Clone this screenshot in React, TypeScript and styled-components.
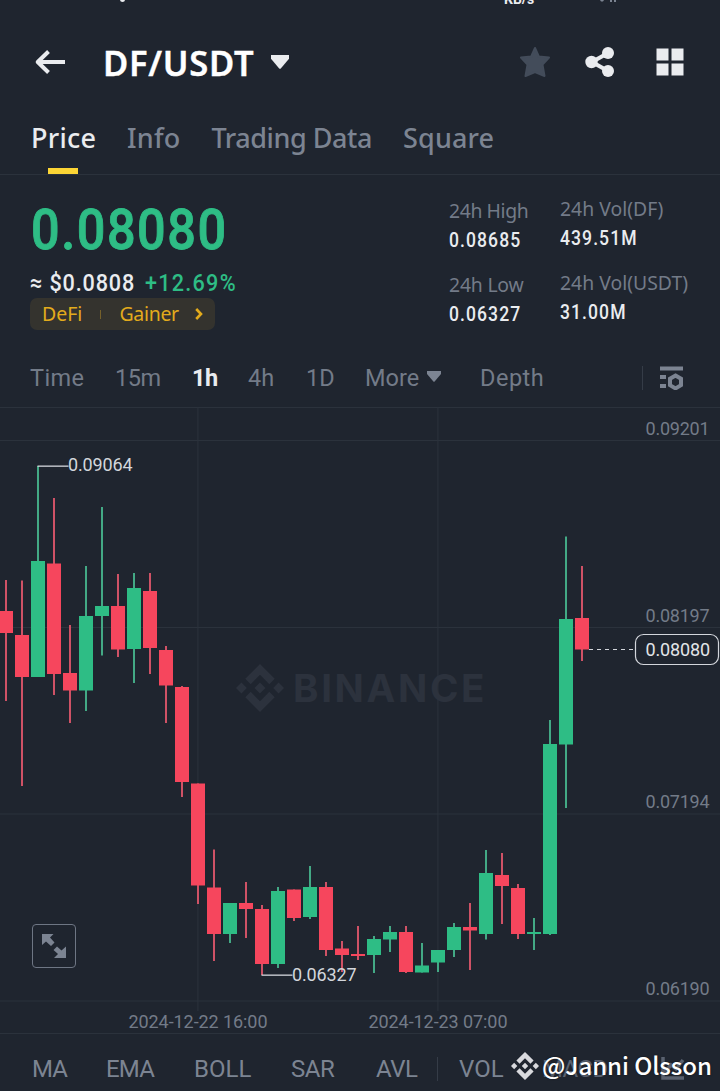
import React from 'react';
import styled, { createGlobalStyle } from 'styled-components';

const c = {
  bg: '#1f252f',
  line: '#2b323c',
  text: '#eaecef',
  muted: '#7c8492',
  dim: '#737b88',
  green: '#2ebd85',
  red: '#f6465d',
  yellow: '#fcd535',
  amber: '#e3ab1c',
};

const words = '"Noto Sans", "Open Sans", sans-serif';
const digits = 'Roboto, "Liberation Sans", sans-serif';

const GlobalStyle = createGlobalStyle`
  * { box-sizing: border-box; }
  body { margin: 0; background: ${c.bg}; }
`;

const Screen = styled.main`
  width: 720px;
  height: 1091px;
  display: flex;
  flex-direction: column;
  overflow: hidden;
  background: ${c.bg};
  color: ${c.text};
  font-family: ${words};
`;

const Label = styled.span<{ $size: number; $color?: string; $weight?: number; $track?: number; $digits?: boolean }>`
  display: block;
  white-space: nowrap;
  font-family: ${(p) => (p.$digits ? digits : words)};
  font-size: ${(p) => p.$size}px;
  font-weight: ${(p) => p.$weight ?? 400};
  letter-spacing: ${(p) => p.$track ?? 0}px;
  color: ${(p) => p.$color ?? c.text};
`;

// Figures are set slightly condensed and loosely tracked.
const Figure = styled(Label)`
  font-family: ${digits};
  transform: scaleX(0.9);
  transform-origin: left center;
`;

const StatusBar = styled.div`
  height: 4px;
  flex: none;
  display: flex;
  align-items: flex-end;
  overflow: hidden;
  padding-left: 120px;
`;

const StatusDot = styled.i`
  width: 5px;
  height: 5px;
  margin-bottom: 2px;
  border-radius: 50%;
  background: ${c.text};
`;

const StatusText = styled.span`
  width: 96px;
  margin-left: 379px;
  font: 700 14px/14px ${digits};
  margin-bottom: -2px;
`;

const Header = styled.header`
  height: 116px;
  flex: none;
  display: flex;
  align-items: center;
  padding: 0 36px 0 34px;
`;

const Title = styled.h1`
  width: 153px;
  margin: 2px 15px 0 37px;
  font: 600 34.5px/44px ${words};
  letter-spacing: 0.75px;
  -webkit-text-stroke: 0.4px #fff;
  white-space: nowrap;
  color: #fff;
`;

const Actions = styled.div`
  margin-left: auto;
  display: flex;
  align-items: center;
  gap: 35px;
`;

const Tabs = styled.nav`
  height: 55px;
  flex: none;
  display: flex;
  border-bottom: 1px solid ${c.line};
  padding-left: 31px;
`;

const Tab = styled.div<{ $width: number; $track: number; $active?: boolean }>`
  width: ${(p) => p.$width}px;
  display: flex;
  flex-direction: column;
  justify-content: space-between;
  font: 500 27px/36px ${words};
  letter-spacing: ${(p) => p.$track}px;
  white-space: nowrap;
  color: ${(p) => (p.$active ? c.text : c.muted)};
`;

const TabMarker = styled.i`
  width: 30px;
  height: 6px;
  margin-left: 17px;
  background: ${c.yellow};
`;

const Quote = styled.section`
  height: 171px;
  flex: none;
  display: flex;
  padding-left: 30px;
`;

const PriceColumn = styled.div`
  width: 419px;
  display: flex;
  flex-direction: column;
  align-items: flex-start;
`;

const BigPrice = styled.div`
  margin: 23px 0 0 1px;
  font: 500 56px/64px ${digits};
  letter-spacing: 1.7px;
  -webkit-text-stroke: 0.9px ${c.green};
  transform: scaleX(0.9);
  transform-origin: left center;
  color: ${c.green};
`;

const SubPrice = styled.div`
  display: grid;
  grid-template-columns: 115px auto;
  margin-top: 7px;
  line-height: 29px;
`;

const Tags = styled.div`
  display: flex;
  align-items: center;
  width: 185px;
  height: 32px;
  padding: 0 12px;
  line-height: 24px;
  border-radius: 7px;
  background: #34332e;
`;

const TagDivider = styled.i`
  width: 1px;
  height: 9px;
  margin: 0 18px;
  background: #75602a;
`;

const StatColumn = styled.div<{ $width: number; $top: number }>`
  width: ${(p) => p.$width}px;
  padding-top: ${(p) => p.$top}px;
  display: flex;
  flex-direction: column;
  gap: 15px;
`;

const Stat = styled.div`
  display: flex;
  flex-direction: column;
  gap: 1px;
  line-height: 29px;
`;

const Intervals = styled.nav`
  height: 61px;
  flex: none;
  display: flex;
  align-items: center;
  padding: 2px 0 0 30px;
`;

const Interval = styled.div<{ $width: number }>`
  width: ${(p) => p.$width}px;
  display: flex;
  align-items: center;
  gap: 8px;

  svg {
    margin-bottom: 3px;
  }
`;

const Divider = styled.i<{ $gap: number }>`
  width: 1px;
  height: 24px;
  background: #353c47;
  margin-right: ${(p) => p.$gap}px;
`;

const ChartArea = styled.section`
  position: relative;
  height: 627px;
  flex: none;
`;

const ExpandButton = styled.button`
  position: absolute;
  left: 32px;
  top: 517px;
  width: 44px;
  height: 44px;
  display: grid;
  place-items: center;
  padding: 0;
  border: 1px solid #6e7684;
  border-radius: 4px;
  background: ${c.bg};
`;

const Indicators = styled.footer`
  position: relative;
  height: 57px;
  flex: none;
  display: flex;
  align-items: center;
  padding: 12px 0 0 32px;
`;

const Indicator = styled.div<{ $width: number }>`
  width: ${(p) => p.$width}px;
`;

const Signature = styled.div`
  position: absolute;
  left: 511px;
  top: 14px;
  display: flex;
  align-items: center;
  gap: 3px;
  text-shadow: 0 0 2px rgba(0, 0, 0, 0.5);
`;

const Handle = styled.span`
  font: 500 24px/38px "Noto Sans CJK SC", "Noto Sans", sans-serif;
  letter-spacing: -0.05px;
  margin-top: -2px;
  white-space: nowrap;
  color: #fff;
`;

const Caret = ({ w, h, fill }: { w: number; h: number; fill: string }) => (
  <svg width={w} height={h} viewBox="0 0 18 14">
    <path d="M0 0H18V3.8L9.8 13.4Q9 14 8.2 13.4L0 3.8Z" fill={fill} />
  </svg>
);

const BinanceMark = ({ size, fill }: { size: number; fill: string }) => (
  <svg width={size} height={size} viewBox="0 0 126.61 126.61" fill={fill}>
    <path d="M38.73 53.2 63.31 28.62 87.9 53.21 102.2 38.91 63.31 0 24.43 38.9ZM0 63.31 14.3 49 28.6 63.31 14.3 77.61ZM38.73 73.41 63.31 98 87.9 73.4 102.21 87.69 63.31 126.61 24.42 87.72ZM98 63.31 112.3 49 126.61 63.3 112.31 77.61ZM77.83 63.3 63.31 48.77 48.77 63.3 63.31 77.82Z" />
  </svg>
);

// Each candle: direction, body top, body bottom, high, low.
type Candle = ['u' | 'd', number, number, number, number];
const candles: Candle[] = [
  ['d', 611, 633, 580, 701],
  ['d', 635, 677, 580.5, 786],
  ['u', 561, 677, 466, 677],
  ['d', 563.5, 674, 498, 695],
  ['d', 673, 690.5, 625, 723],
  ['u', 616, 690.5, 566, 711],
  ['u', 606, 616, 507, 655.5],
  ['d', 606, 649.5, 574, 657],
  ['u', 588, 649, 573, 683],
  ['d', 591, 648, 573, 674],
  ['d', 650, 685.5, 646, 723],
  ['d', 687, 782, 686, 797],
  ['d', 783.5, 885.5, 783.5, 904],
  ['d', 887.5, 934, 849.5, 961],
  ['u', 903, 934, 903, 943],
  ['d', 903, 909, 882, 938],
  ['d', 909, 964, 905, 975],
  ['u', 891, 964, 887, 968],
  ['d', 889.5, 918, 889.5, 921],
  ['u', 887, 917, 866, 919],
  ['d', 887, 950, 882, 956],
  ['d', 948.5, 955, 941, 972],
  ['d', 954, 956, 926, 960],
  ['u', 939, 955, 936, 973],
  ['u', 932, 939.5, 926, 952],
  ['d', 932, 972, 926, 973],
  ['u', 965.5, 972.5, 943, 972.5],
  ['u', 950, 962.5, 950, 972],
  ['u', 927, 950, 923, 957],
  ['d', 927, 930.5, 903, 970],
  ['u', 873, 934, 850, 939.5],
  ['d', 875, 886, 853, 924],
  ['d', 888, 934, 884, 939],
  ['u', 932, 934, 918, 950],
  ['u', 744, 934, 720, 935],
  ['u', 619, 744.5, 536.5, 808],
  ['d', 618, 649.5, 566, 661],
];

const Chart = () => (
  <svg width="720" height="627" viewBox="0 407 720 627" fontFamily={digits} fontSize="18" style={{ display: 'block' }}>
    <g fill={c.line}>
      <rect y="406" width="720" height="2" />
      <rect y="440" width="720" height="1" />
      <rect y="627" width="720" height="1" />
      <rect y="813.5" width="720" height="1" />
      <rect y="1000.5" width="720" height="1" />
      <rect y="1033" width="720" height="1" />
      <rect x="197.4" y="407" width="1" height="604" />
      <rect x="437.4" y="407" width="1" height="604" />
    </g>
    <g transform="translate(236 664)">
      <BinanceMark size={48} fill="#2c323d" />
    </g>
    <text x="293" y="702" fontFamily={'Inter, sans-serif'} fontWeight="700" fontSize="38.5" fill="#2c323d" textLength="191.5">BINANCE</text>
    {candles.map(([dir, top, bottom, high, low], i) => (
      <g key={i}>
        <rect x={i * 16 + 5} y={high} width="2" height={low - high} fill={dir === 'u' ? '#43a985' : '#cf5266'} />
        <rect x={i * 16 - 1} y={top} width="14" height={bottom - top} fill={dir === 'u' ? c.green : c.red} />
      </g>
    ))}
    <g fill="#d3d6dc">
      <rect x="37.5" y="465.5" width="31" height="1.3" />
      <text x="68" y="471" textLength="64.5">0.09064</text>
      <rect x="261.5" y="974.5" width="31" height="1.3" />
      <text x="292" y="981" textLength="64.5">0.06327</text>
    </g>
    <path d="M589 649.5H635" stroke="#d3d6dc" strokeWidth="1.2" strokeDasharray="4 4" />
    <rect x="635.5" y="634.5" width="83" height="30" rx="8" fill={c.bg} stroke="#d3d6dc" strokeWidth="1.2" />
    <text x="645.5" y="656" textLength="64.5" fill="#e2e4e8">0.08080</text>
    <g fill={c.dim}>
      <text x="645.5" y="435" textLength="64">0.09201</text>
      <text x="645.5" y="622" textLength="64">0.08197</text>
      <text x="645.5" y="808" textLength="64">0.07194</text>
      <text x="645.5" y="995" textLength="64">0.06190</text>
      <text x="128.5" y="1028" textLength="139">2024-12-22 16:00</text>
      <text x="368.5" y="1028" textLength="139">2024-12-23 07:00</text>
    </g>
  </svg>
);

const tabs = [
  { name: 'Price', width: 96, track: 0.25 },
  { name: 'Info', width: 84.5, track: 0.2 },
  { name: 'Trading Data', width: 191.5, track: -0.45 },
  { name: 'Square', width: 100, track: 0.15 },
];

const intervals = [
  { name: 'Time', width: 85, track: 0.4 },
  { name: '15m', width: 77, track: -0.4 },
  { name: '1h', width: 56, track: -0.6 },
  { name: '4h', width: 58, track: 0 },
  { name: '1D', width: 59, track: 0 },
  { name: 'More', width: 115, track: 0 },
  { name: 'Depth', width: 162, track: 0.5 },
];

const indicators = [
  { name: 'MA', width: 74, track: -1 },
  { name: 'EMA', width: 88, track: -0.8 },
  { name: 'BOLL', width: 97, track: 0 },
  { name: 'SAR', width: 85, track: -0.4 },
  { name: 'AVL', width: 61, track: -0.5 },
];

const stats = [
  { width: 111, top: 21, items: [['24h High', '0.08685', -0.4], ['24h Low', '0.06327', -0.2]] },
  { width: 140, top: 19, items: [['24h Vol(DF)', '439.51M', 0], ['24h Vol(USDT)', '31.00M', 0]] },
] as const;

export default function App() {
  return (
    <>
      <GlobalStyle />
      <Screen>
        <StatusBar>
          <StatusDot />
          <StatusText>KB/s</StatusText>
          <svg width="18" height="4" viewBox="0 0 18 4" fill={c.muted}>
            <path d="M0 0H4L3 1.500H1ZM10 0H12V2H10ZM14 0H16V2H14Z" />
          </svg>
        </StatusBar>
        <Header>
          <svg width="32" height="26" viewBox="0 0 32 26" fill="none" stroke={c.text} strokeWidth="4">
            <path d="M14.5 2.500 3.7 13 14.5 23.500M4 13H31" strokeLinejoin="round" />
          </svg>
          <Title>DF/USDT</Title>
          <Caret w={18} h={14} fill={c.text} />
          <Actions>
            <svg width="30" height="32" viewBox="0 0 30 32" fill="#434c5a" stroke="#434c5a" strokeWidth="2" strokeLinejoin="round">
              <path d="M15 2 18.8 10.5 29 11.5 22.5 18.7 24.5 30 15 26 5.500 30 7.500 18.700 1 11.500 11.200 10.500Z" />
            </svg>
            <svg width="30" height="32" viewBox="0 0 30 32" fill={c.text}>
              <path d="M23 7 7 16 23 25" fill="none" stroke={c.text} strokeWidth="4" />
              <circle cx="23" cy="7" r="6" />
              <circle cx="6.500" cy="16" r="6.200" />
              <circle cx="23" cy="25" r="6" />
            </svg>
            <svg width="28" height="28" viewBox="0 0 28 28" fill={c.text} style={{ marginLeft: 6 }}>
              <path d="M0.500 0.500h12v12h-12zM15.500 0.500h12v12h-12zM0.500 15.500h12v12h-12zM15.500 15.500h12v12h-12z" />
            </svg>
          </Actions>
        </Header>
        <Tabs>
          {tabs.map((t, i) => (
            <Tab key={t.name} $width={t.width} $track={t.track} $active={i === 0}>
              {t.name}
              {i === 0 && <TabMarker />}
            </Tab>
          ))}
        </Tabs>
        <Quote>
          <PriceColumn>
            <BigPrice>0.08080</BigPrice>
            <SubPrice>
              <Figure $size={24} $weight={500} $track={0.95}>≈ $0.0808</Figure>
              <Figure $size={24} $weight={500} $track={1.4} $color={c.green}>+12.69%</Figure>
            </SubPrice>
            <Tags>
              <Label $size={19.5} $color={c.amber}>DeFi</Label>
              <TagDivider />
              <Label $size={19.5} $track={-0.3} $color={c.amber}>Gainer</Label>
              <svg width="8" height="12" viewBox="0 0 8 12" fill="none" stroke={c.amber} strokeWidth="2.600" style={{ marginLeft: 'auto' }}>
                <path d="M1.200 1 6 6 1.200 11" />
              </svg>
            </Tags>
          </PriceColumn>
          {stats.map((col) => (
            <StatColumn key={col.width} $width={col.width} $top={col.top}>
              {col.items.map(([name, value, track]) => (
                <Stat key={name}>
                  <Label $size={19.4} $track={track} $color={c.dim}>{name}</Label>
                  <Figure $size={19.5} $weight={500} $track={1.2}>{value}</Figure>
                </Stat>
              ))}
            </StatColumn>
          ))}
        </Quote>
        <Intervals>
          {intervals.map((t) => (
            <Interval key={t.name} $width={t.width}>
              <Label $size={23.5} $digits $track={t.track} $color={t.name === '1h' ? c.text : c.dim} $weight={t.name === '1h' ? 700 : 400}>{t.name}</Label>
              {t.name === 'More' && <Caret w={14} h={11} fill={c.muted} />}
            </Interval>
          ))}
          <Divider $gap={16} />
          <svg width="25" height="24" viewBox="0 0 25 24" fill="none" stroke={c.muted} strokeWidth="4">
            <path d="M1 2.500H24M1 11H7M1 20H7" />
            <path d="M16.500 9.500 22 12.700V19.200L16.500 22.400 11 19.200V12.700Z" />
          </svg>
        </Intervals>
        <ChartArea>
          <Chart />
          <ExpandButton>
            <svg width="26" height="26" viewBox="0 0 26 26" fill={c.muted}>
              <path d="M1 1H12.500L9 4.500 13.500 9.500 10 13 5 8.500 1 12ZM25 25H13L17 21 12.500 17 16 13.500 20.500 17.500 25 13.500Z" />
            </svg>
          </ExpandButton>
        </ChartArea>
        <Indicators>
          {indicators.map((t) => (
            <Indicator key={t.name} $width={t.width}>
              <Label $size={24} $digits $track={t.track} $color={c.muted}>{t.name}</Label>
            </Indicator>
          ))}
          <Divider $gap={21} />
          <Indicator $width={83}>
            <Label $size={24} $digits $color={c.muted}>VOL</Label>
          </Indicator>
          <Indicator $width={119}>
            <Label $size={24} $digits $track={-0.6} $color="#5a6270">MACD</Label>
          </Indicator>
          <svg width="24" height="24" viewBox="0 0 24 24" fill="none" stroke="#5a6270" strokeWidth="3.500">
            <path d="M2 0V21H23M4 15 10 8 15 12 22 3" />
          </svg>
          <Signature>
            <BinanceMark size={28} fill="#d9dade" />
            <Handle>@Janni Olsson</Handle>
          </Signature>
        </Indicators>
      </Screen>
    </>
  );
}
